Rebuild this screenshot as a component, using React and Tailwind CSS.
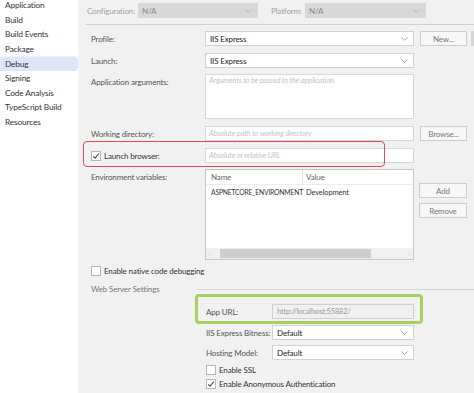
import React from "react";

const Chevron = ({ color = "#9a9a9a" }) => (
  <svg width="7" height="4" viewBox="0 0 7 4" className="shrink-0">
    <path d="M0.5 0.5 L3.5 3.3 L6.5 0.5" fill="none" stroke={color} strokeWidth="0.9" />
  </svg>
);

const Check = () => (
  <svg width="8" height="8" viewBox="0 0 8 8">
    <path d="M1.2 4.3 L3.1 6.2 L6.9 1.5" fill="none" stroke="#444" strokeWidth="1.1" />
  </svg>
);

const Box = ({ checked }) => (
  <div className="w-[10px] h-[10px] border border-[#b5b5b5] bg-white flex items-center justify-center shrink-0">
    {checked && <Check />}
  </div>
);

const Select = ({ value, w = "w-[209px]" }) => (
  <div className={`${w} h-[15px] bg-white border border-[#d2d2d2] flex items-center justify-between pl-[4px] pr-[5px] text-[#222] shrink-0`}>
    <span>{value}</span>
    <Chevron />
  </div>
);

const Input = ({ ph, h = "h-[15px]", top = false }) => (
  <div className={`w-[209px] ${h} bg-white border border-[#d7d7d7] flex ${top ? "items-start pt-[2px]" : "items-center"} pl-[3px] italic text-[#c4c4c4] text-[7.5px] shrink-0`}>
    {ph}
  </div>
);

const Btn = ({ children, w = "w-[47px]" }) => (
  <div className={`${w} h-[15px] bg-[#f7f7f7] border border-[#cdcdcd] flex items-center justify-center text-[#777]`}>
    {children}
  </div>
);

export default function App() {
  const items = ["Application", "Build", "Build Events", "Package", "Debug", "Signing", "Code Analysis", "TypeScript Build", "Resources"];
  return (
    <div className="w-[474px] h-[393px] overflow-hidden flex bg-white text-[8px] tracking-[-0.15px] leading-none whitespace-nowrap" style={{ fontFamily: 'Lato, "Noto Sans", sans-serif' }}>
      {/* Sidebar */}
      <div className="w-[78px] shrink-0 bg-white flex flex-col -mt-[2px] text-[#333] text-[8.3px]">
        {items.map((it) => (
          <div
            key={it}
            className={`h-[14.6px] flex items-center pl-[5px] ${it === "Debug" ? "bg-[#dfe5f8] w-[80px] [clip-path:polygon(0_0,95%_0,100%_50%,95%_100%,0_100%)]" : ""}`}
          >
            {it}
          </div>
        ))}
      </div>

      {/* Main */}
      <div className="flex-1 bg-[#f1f1f1] relative flex flex-col">
        {/* Top bar */}
        <div className="ml-[8px] h-[25px] border-b border-[#d0d0d0] flex items-start pt-[3px] text-[#a0a0a0]">
          <div className="w-[52px] h-[15px] flex items-center pl-[1px]">Configuration:</div>
          <div className="w-[120px] h-[15px] bg-[#d8d8d8] flex items-center justify-between pl-[4px] pr-[6px] text-[#8a8a8a]">
            <span>N/A</span>
            <Chevron color="#b0b0b0" />
          </div>
          <div className="w-[34px] ml-[13px] h-[15px] flex items-center">Platform:</div>
          <div className="w-[121px] h-[15px] bg-[#d8d8d8] flex items-center justify-between pl-[4px] pr-[6px] text-[#8a8a8a]">
            <span>N/A</span>
            <Chevron color="#b0b0b0" />
          </div>
        </div>

        <div className="pl-[13px] flex flex-col text-[#555]">
          {/* Profile */}
          <div className="mt-[6px] flex items-center">
            <div className="w-[114px] shrink-0">Profile:</div>
            <Select value="IIS Express" />
            <div className="ml-[6px] shrink-0"><Btn>New...</Btn></div>
            <div className="ml-[4px] w-[6px] h-[15px] bg-[#d6d6d6] shrink-0" />
          </div>
          {/* Launch */}
          <div className="mt-[7px] flex items-center">
            <div className="w-[114px] shrink-0">Launch:</div>
            <Select value="IIS Express" />
          </div>
          {/* Args */}
          <div className="mt-[6px] flex items-start">
            <div className="w-[114px] shrink-0 pt-[4px]">Application arguments:</div>
            <Input ph="Arguments to be passed to the application" h="h-[45px]" top />
          </div>
          {/* Working dir */}
          <div className="mt-[7px] flex items-center">
            <div className="w-[114px] shrink-0">Working directory:</div>
            <Input ph="Absolute path to working directory" />
            <div className="ml-[6px] shrink-0"><Btn>Browse...</Btn></div>
          </div>
          {/* Launch browser */}
          <div className="mt-[7px] flex items-center">
            <div className="w-[114px] shrink-0 flex items-center gap-[3px] text-[#333]">
              <Box checked />
              <span>Launch browser:</span>
            </div>
            <Input ph="Absolute or relative URL" />
          </div>
          {/* Env vars */}
          <div className="mt-[6px] flex items-start">
            <div className="w-[114px] shrink-0 pt-[4px]">Environment variables:</div>
            <div className="w-[209px] shrink-0 h-[91px] bg-white border border-[#c6c6c6] flex flex-col">
              <div className="h-[15px] flex items-center text-[#666] border-b border-[#ececec]">
                <div className="w-[97px] pl-[5px] border-r border-[#e2e2e2] h-full flex items-center">Name</div>
                <div className="pl-[3px]">Value</div>
              </div>
              <div className="h-[15px] flex items-center text-[#333]">
                <div className="w-[97px] pl-[5px] text-[6.8px] tracking-[-0.2px]">ASPNETCORE_ENVIRONMENT</div>
                <div className="pl-[3px] text-[7.5px]">Development</div>
              </div>
              <div className="flex-1" />
              <div className="h-[11px] bg-[#f0f0f0] flex items-center px-[3px] text-[#c0c0c0] text-[6px]">
                <span className="w-[11px]">‹</span>
                <div className="w-[151px] h-[9px] bg-[#cdcdcd]" />
                <div className="flex-1" />
                <span>›</span>
              </div>
            </div>
            <div className="ml-[5px] mt-[14px] flex flex-col gap-[5px] shrink-0">
              <Btn w="w-[48px]">Add</Btn>
              <Btn w="w-[48px]">Remove</Btn>
            </div>
          </div>
          {/* Native */}
          <div className="mt-[6px] flex items-center gap-[3px] text-[#333]">
            <Box />
            <span>Enable native code debugging</span>
          </div>
          {/* Web server */}
          <div className="mt-[9px] flex items-center">
            <div className="w-[106px] text-[#777]">Web Server Settings</div>
            <div className="flex-1 h-px bg-[#d6d6d6]" />
          </div>
          <div className="pl-[115px] flex flex-col">
            <div className="mt-[11px] flex items-center">
              <div className="w-[66px] shrink-0">App URL:</div>
              <div className="w-[142px] h-[15px] bg-[#f0f0f0] border border-[#cfcfcf] flex items-center pl-[4px] text-[#999] text-[7.5px]">http://localhost:55882/</div>
            </div>
            <div className="mt-[6px] flex items-center">
              <div className="w-[66px] shrink-0">IIS Express Bitness:</div>
              <Select value="Default" w="w-[142px]" />
            </div>
            <div className="mt-[5px] flex items-center">
              <div className="w-[66px] shrink-0">Hosting Model:</div>
              <Select value="Default" w="w-[142px]" />
            </div>
            <div className="mt-[5px] flex items-center gap-[3px] text-[#333]">
              <Box />
              <span>Enable SSL</span>
            </div>
            <div className="mt-[4px] flex items-center gap-[3px] text-[#333]">
              <Box checked />
              <span>Enable Anonymous Authentication</span>
            </div>
          </div>
        </div>

        {/* Red highlight */}
        <div className="absolute left-[5px] top-[141px] w-[302px] h-[26px] border-[1.5px] border-[#e2485a] rounded-[4px]" />
        {/* Green highlight */}
        <div className="absolute left-[117px] top-[294px] w-[228px] h-[30px] border-[3px] border-[#a8d060] rounded-[4px]" />
      </div>
    </div>
  );
}
